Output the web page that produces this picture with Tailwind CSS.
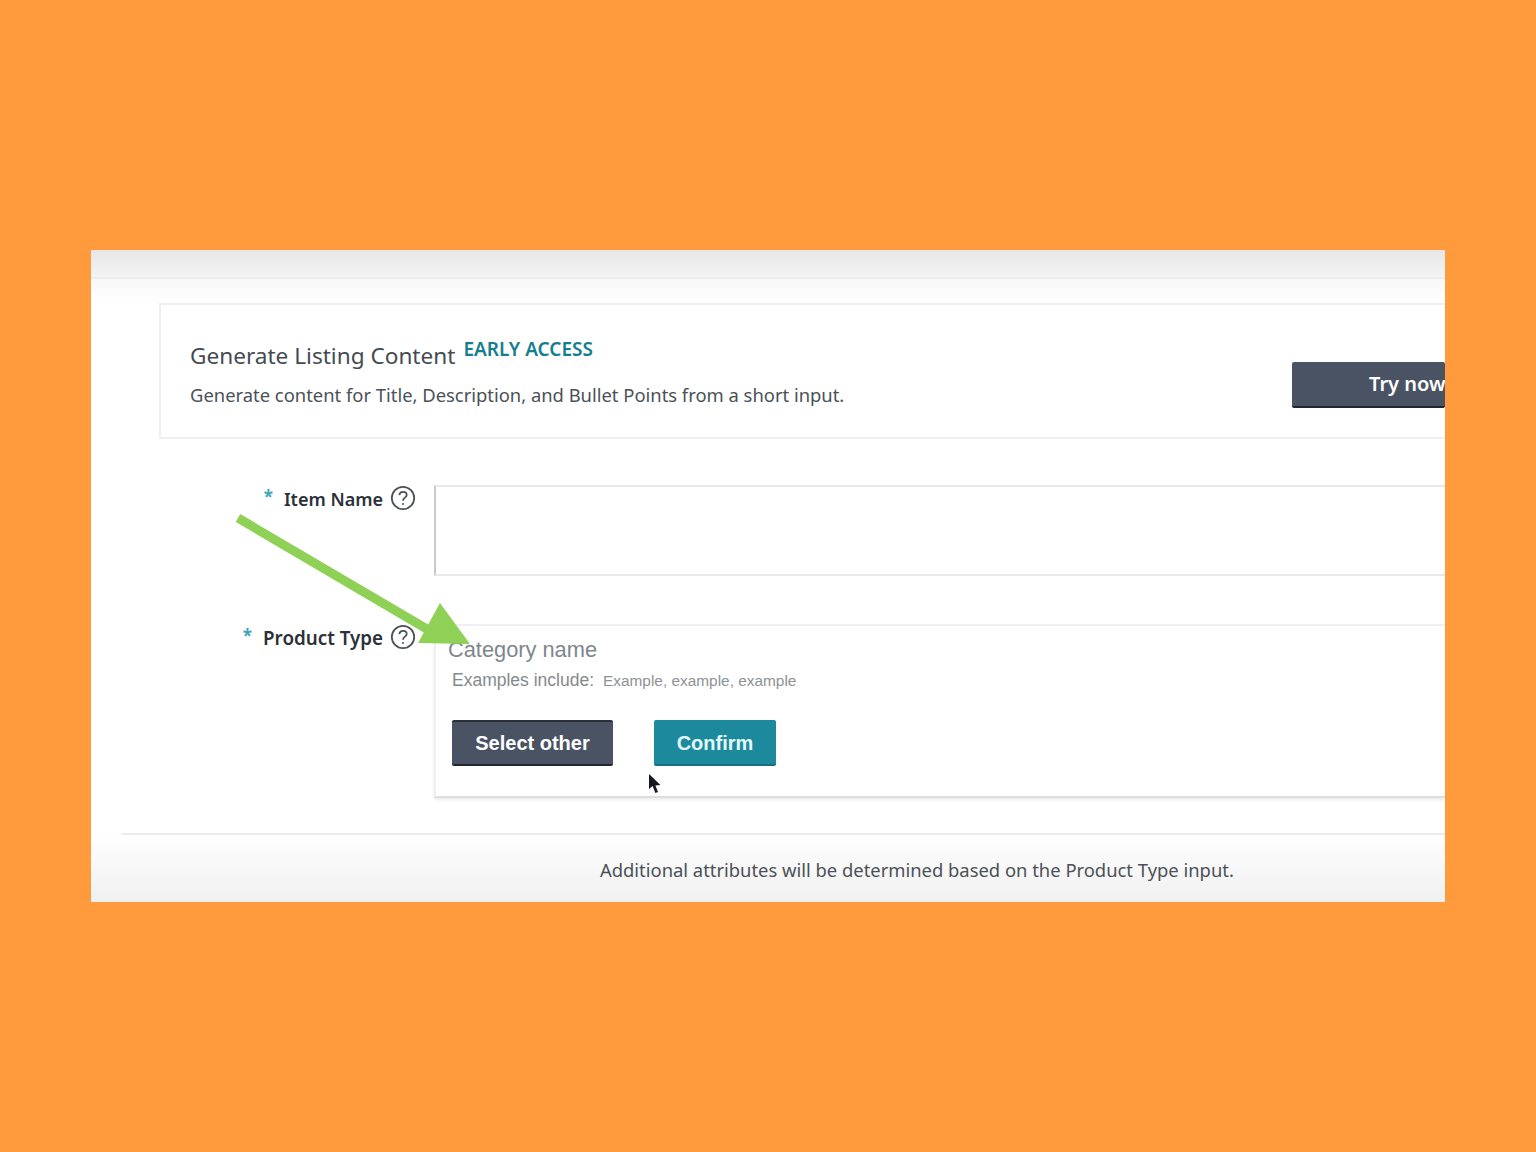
<!DOCTYPE html>
<html lang="en">
<head>
    <meta charset="UTF-8">
    <title>Generate Listing Content</title>
    <script src="https://cdn.jsdelivr.net/npm/@tailwindcss/browser@4"></script>
</head>
<body class="bg-[#ff9a3d] w-[1536px] h-[1152px] overflow-hidden pt-[250px] pl-[91px] font-['Noto_Sans',sans-serif]">

    <!-- screenshot panel -->
    <div class="relative w-[1354px] h-[652px] bg-white overflow-hidden flex flex-col">
        <!-- top strip -->
        <div class="h-[29px] shrink-0 bg-gradient-to-b from-[#e6e6e6] to-[#f4f4f4] border-b-2 border-[#ececec]"></div>
        <div class="h-[24px] shrink-0 bg-gradient-to-b from-[#f8f8f8] to-white"></div>

        <!-- generate card -->
        <div class="ml-[68px] w-[1340px] h-[136px] shrink-0 border-2 border-[#efefef] border-r-0 pl-[29px] pr-[54px] flex items-center justify-between">
            <div class="flex flex-col gap-[12px] pt-[5px]">
                <div class="flex items-start">
                    <span class="text-[22.6px] leading-[30px] text-[#444b52]">Generate Listing Content</span>
                    <span class="ml-[8px] -mt-[4px] text-[19px] leading-[24px] font-semibold text-[#137f8e]">EARLY ACCESS</span>
                </div>
                <p class="text-[18.4px] leading-[24px] text-[#4b5157] whitespace-nowrap">Generate content for Title, Description, and Bullet Points from a short input.</p>
            </div>
            <button class="w-[153px] h-[46px] mt-[27px] shrink-0 bg-[#4a5364] border-b-2 border-[#23282f] rounded-[2px] pl-[77px] text-left text-[20px] font-semibold text-white whitespace-nowrap overflow-hidden">Try now</button>
        </div>

        <!-- form rows -->
        <div class="flex mt-[46px] shrink-0">
            <div class="w-[325px] shrink-0 flex justify-end items-start gap-[8px]">
                <span class="text-[#3fa6b8] text-[17px] leading-[24px] font-bold mr-[3px]">*</span>
                <span class="text-[18px] leading-[28px] font-semibold text-[#2b3138]">Item Name</span>
                <svg class="w-[26px] h-[26px] -ml-[1px]" viewBox="0 0 26 26" fill="none" stroke="#4c5258" stroke-width="1.8"><circle cx="13" cy="13" r="11.2"/><path d="M9.4 10.2c.2-2.2 1.8-3.4 3.7-3.4 2 0 3.6 1.3 3.6 3.1 0 2.7-3.7 2.8-3.7 5.8"/><circle cx="13" cy="19" r="1" fill="#4c5258" stroke="none"/></svg>
            </div>
            <div class="ml-[18px] w-[1100px] h-[91px] border-2 border-[#e9e9e9] border-l-[#c9c9c9] border-r-0"></div>
        </div>

        <div class="flex mt-[48px] shrink-0">
            <div class="w-[325px] shrink-0 flex justify-end items-start gap-[8px]">
                <span class="text-[#3fa6b8] text-[17px] leading-[24px] font-bold mr-[3px]">*</span>
                <span class="text-[18.8px] leading-[28px] font-semibold text-[#2b3138]">Product Type</span>
                <svg class="w-[26px] h-[26px] -ml-[1px]" viewBox="0 0 26 26" fill="none" stroke="#4c5258" stroke-width="1.8"><circle cx="13" cy="13" r="11.2"/><path d="M9.4 10.2c.2-2.2 1.8-3.4 3.7-3.4 2 0 3.6 1.3 3.6 3.1 0 2.7-3.7 2.8-3.7 5.8"/><circle cx="13" cy="19" r="1" fill="#4c5258" stroke="none"/></svg>
            </div>
            <div class="ml-[18px] w-[1100px] h-[174px] border-2 border-[#efefef] border-b-[#dedede] border-r-0 shadow-[0_2px_3px_rgba(0,0,0,0.08)] pl-[16px] pt-[8px] font-['Liberation_Sans',sans-serif]">
                <div class="-ml-[4px] text-[21.8px] leading-[32px] text-[#7e868c]">Category name</div>
                <div class="flex items-center mt-[2px] h-[24px]">
                    <span class="text-[17.5px] text-[#85898d]">Examples include:</span>
                    <span class="ml-[9px] mt-[1px] text-[15.4px] text-[#8e9296]">Example, example, example</span>
                </div>
                <div class="flex gap-[41px] mt-[28px]">
                    <button class="w-[161px] h-[46px] bg-[#4a5364] border-y-2 border-t-[#2b2f38] border-b-[#23282f] rounded-[2px] text-[20px] font-bold text-white">Select other</button>
                    <button class="w-[122px] h-[46px] bg-[#1c8a9c] border-b-2 border-[#15707f] rounded-[2px] pt-[1px] text-[20px] font-bold text-[#e4f8fb]">Confirm</button>
                </div>
            </div>
        </div>

        <!-- footer note -->
        <div class="mt-[35px] flex-1 bg-gradient-to-b from-white to-[#f0f0f0] pl-[30px]">
            <div class="border-t-2 border-[#ececec] pl-[479px] pt-[23px]">
                <p class="text-[18.4px] leading-[24px] text-[#4b5157] whitespace-nowrap">Additional attributes will be determined based on the Product Type input.</p>
            </div>
        </div>

        <!-- green arrow, over the form -->
        <svg class="absolute left-[140px] top-[260px]" width="250" height="150" viewBox="0 0 250 150">
            <path d="M7 8 L206 125" stroke="#8fd157" stroke-width="9" fill="none"/>
            <path d="M209 93 L239 134 L187 133 Z" fill="#8fd157"/>
        </svg>

        <!-- mouse cursor -->
        <svg class="absolute left-[557px] top-[523px]" width="15" height="23" viewBox="0 0 15 23">
            <path d="M1 1 L1 16 L4.6 13 L7.4 20 L10 19 L7.4 12.4 L12.4 12 Z" fill="#15181c"/>
        </svg>
    </div>
</body>
</html>
